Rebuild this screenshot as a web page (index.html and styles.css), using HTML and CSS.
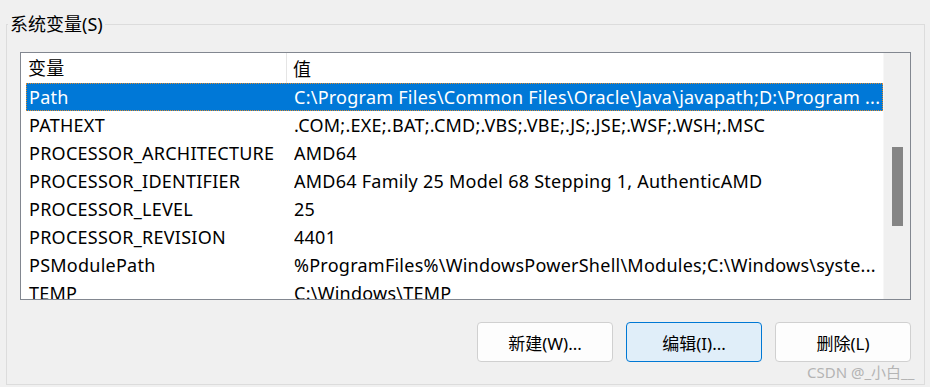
FILE: index.html
```html
<!DOCTYPE html>
<html lang="zh-CN">
<head>
    <meta charset="UTF-8">
    <title>系统变量</title>
    <link rel="stylesheet" href="styles.css">
</head>
<body>
    <fieldset class="group">
        <legend>系统变量(S)</legend>
        <div class="listbox">
            <div class="table">
                <div class="header">
                    <div class="col-name">变量</div>
                    <div class="col-value">值</div>
                </div>
                <div class="row selected">
                    <div class="col-name">Path</div>
                    <div class="col-value">C:\Program Files\Common Files\Oracle\Java\javapath;D:\Program ...</div>
                </div>
                <div class="row">
                    <div class="col-name">PATHEXT</div>
                    <div class="col-value">.COM;.EXE;.BAT;.CMD;.VBS;.VBE;.JS;.JSE;.WSF;.WSH;.MSC</div>
                </div>
                <div class="row">
                    <div class="col-name">PROCESSOR_ARCHITECTURE</div>
                    <div class="col-value">AMD64</div>
                </div>
                <div class="row">
                    <div class="col-name">PROCESSOR_IDENTIFIER</div>
                    <div class="col-value">AMD64 Family 25 Model 68 Stepping 1, AuthenticAMD</div>
                </div>
                <div class="row">
                    <div class="col-name">PROCESSOR_LEVEL</div>
                    <div class="col-value">25</div>
                </div>
                <div class="row">
                    <div class="col-name">PROCESSOR_REVISION</div>
                    <div class="col-value">4401</div>
                </div>
                <div class="row">
                    <div class="col-name">PSModulePath</div>
                    <div class="col-value">%ProgramFiles%\WindowsPowerShell\Modules;C:\Windows\syste...</div>
                </div>
                <div class="row">
                    <div class="col-name">TEMP</div>
                    <div class="col-value">C:\Windows\TEMP</div>
                </div>
            </div>
            <div class="scrollbar">
                <div class="thumb"></div>
            </div>
        </div>
        <div class="actions">
            <button class="btn">新建(W)...</button>
            <button class="btn active">编辑(I)...</button>
            <button class="btn">删除(L)</button>
        </div>
    </fieldset>
    <div class="watermark">CSDN @_小白__</div>
</body>
</html>
```

FILE: styles.css
```css
:root {
    --bg-color: #f0f0f0;
    --frame-color: #dcdcdc;
    --list-border: #828790;
    --select-color: #0078d7;
}

body {
    margin: 0;
    padding-top: 14px;
    width: 930px;
    height: 373px;
    background-color: var(--bg-color);
    font-family: "Noto Sans", "Noto Sans CJK SC", sans-serif;
    font-size: 18px;
    letter-spacing: 0.25px;
    color: #000;
    position: relative;
    overflow: hidden;
}

.group {
    margin: 0 5px 0 6px;
    padding: 18px 13px 22px 13px;
    border: 1px solid var(--frame-color);
    border-radius: 0;
}

.group legend {
    padding: 0 2px;
    margin-left: -12px;
    line-height: 20px;
    letter-spacing: 0;
}

.listbox {
    display: flex;
    height: 246px;
    border: 1px solid var(--list-border);
    background-color: white;
}

.table {
    flex: 1;
    overflow: hidden;
}

.header {
    display: flex;
    height: 30px;
    align-items: center;
}

.header .col-name {
    width: 258px;
    padding-left: 7px;
    height: 30px;
    line-height: 30px;
    border-right: 1px solid #e5e5e5;
}

.header .col-value {
    padding-left: 6px;
}

.row {
    display: flex;
    height: 28px;
    line-height: 28px;
    margin-left: 5px;
    box-sizing: border-box;
    white-space: nowrap;
}

.row .col-name {
    width: 265px;
    flex-shrink: 0;
    padding-left: 3px;
}

.row .col-value {
    flex: 1;
    overflow: hidden;
    text-overflow: ellipsis;
}

.row.selected {
    background-color: var(--select-color);
    color: white;
    border: 1px dotted #e08a2c;
    line-height: 26px;
}

.row.selected .col-name {
    padding-left: 2px;
}

.scrollbar {
    width: 26px;
    background-color: var(--bg-color);
    border-left: 1px solid #f7f7f7;
    display: flex;
    justify-content: center;
}

.thumb {
    width: 11px;
    height: 79px;
    margin-top: 94px;
    background-color: #858585;
}

.actions {
    display: flex;
    justify-content: flex-end;
    gap: 13px;
    margin-top: 22px;
}

.btn {
    width: 136px;
    height: 40px;
    font-family: inherit;
    font-size: 17px;
    color: #000;
    background-color: #fdfdfd;
    border: 1px solid #d0d0d0;
    border-radius: 4px;
    padding: 0;
}

.btn.active {
    background-color: #e0eef9;
    border-color: #0078d4;
}

.watermark {
    position: absolute;
    left: 807px;
    top: 361px;
    font-size: 15px;
    letter-spacing: 0;
    color: #b4b4b4;
}
```
